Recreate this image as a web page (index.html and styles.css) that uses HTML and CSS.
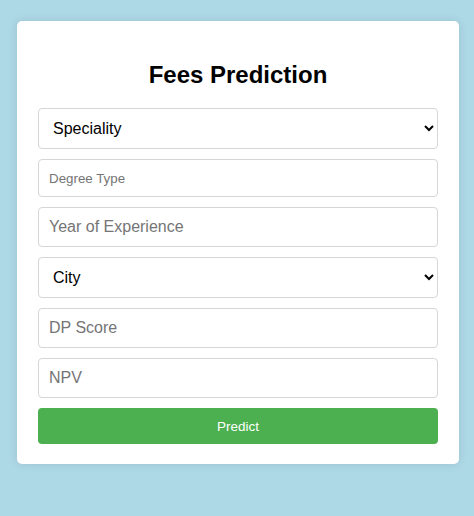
FILE: index.html
```html
<!DOCTYPE html>
<html>
<head>
<meta charset="utf-8">
<title>Fees Prediction</title>
<link rel="stylesheet" href="styles.css">
</head>
<body>
<div class="page">
  <form class="card">
    <h2 class="title">Fees Prediction</h2>
    <select class="field field-select">
      <option>Speciality</option>
    </select>
    <input class="field field-small" type="text" placeholder="Degree Type">
    <input class="field" type="text" placeholder="Year of Experience">
    <select class="field field-select">
      <option>City</option>
    </select>
    <input class="field" type="text" placeholder="DP Score">
    <input class="field" type="text" placeholder="NPV">
    <button class="btn" type="button">Predict</button>
  </form>
</div>
</body>
</html>
```
FILE: styles.css
```css
html, body {
  margin: 0;
  padding: 0;
  background: #add8e6;
  font-family: "Liberation Sans", Arial, sans-serif;
}
.page {
  display: flex;
  justify-content: center;
  padding: 21px 0 0 2px;
  min-height: 516px;
  box-sizing: border-box;
}
.card {
  width: 442px;
  box-sizing: border-box;
  background: #fff;
  border-radius: 5px;
  box-shadow: 0 0 10px rgba(0, 0, 0, 0.1);
  padding: 20px 21px;
  display: flex;
  flex-direction: column;
  gap: 10px;
  height: 443px;
}
.title {
  text-align: center;
  font-size: 24px;
  font-weight: bold;
  color: #000;
  margin: 20px 0 9px;
  line-height: 28px;
}
.field {
  width: 100%;
  box-sizing: border-box;
  padding: 10px;
  border: 1px solid #d6d6d6;
  border-radius: 4px;
  font-family: "Liberation Sans", Arial, sans-serif;
  font-size: 16px;
  background: #fff;
  color: #000;
  margin: 0;
}
.field::placeholder {
  color: #757575;
}
.field-select {
  height: 41px;
  padding: 8px 10px;
}
.field-small {
  font-size: 13.333px;
  height: 38px;
}
.field:not(.field-select):not(.field-small) {
  height: 40px;
}
.btn {
  height: 36px;
  background: #4caf50;
  color: #fff;
  border: none;
  border-radius: 4px;
  font-family: "Liberation Sans", Arial, sans-serif;
  font-size: 13.5px;
  padding: 0;
}
```
